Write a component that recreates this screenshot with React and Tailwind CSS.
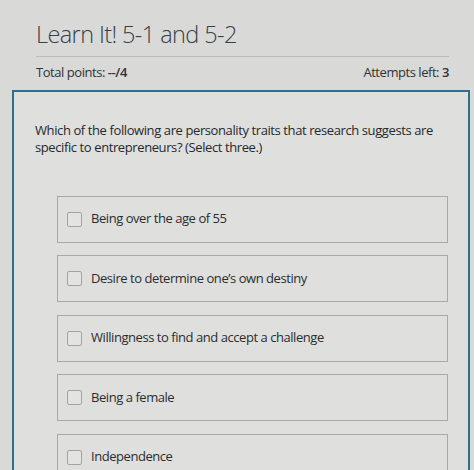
import React from 'react';

const options = [
  'Being over the age of 55',
  'Desire to determine one\u2019s own destiny',
  'Willingness to find and accept a challenge',
  'Being a female',
  'Independence',
];

function Option({ label }) {
  return (
    <div className="flex items-center h-[47px] border border-[#a9aaa8] bg-[#dfdfdd] pl-[9px] mb-[12.5px]">
      <span className="w-[15px] h-[15px] border border-[#a3a4a2] rounded-[2px] bg-[#e3e3e1] shrink-0" />
      <span className="ml-[9px] text-[13px] tracking-[-0.45px] text-[#2a2d30]">{label}</span>
    </div>
  );
}

export default function App() {
  return (
    <div
      className="w-[474px] h-[470px] overflow-hidden bg-[#d9d9d7] pl-[12px]"
      style={{ fontFamily: '"Open Sans", "Noto Sans", sans-serif' }}
    >
      <div className="pt-[18px] pl-[24px] pr-[25px]">
        <h1 className="text-[23.5px] font-light tracking-[-0.6px] text-[#35404a] leading-[32px]">Learn It! 5-1 and 5-2</h1>
        <div className="h-px bg-[#bcbcba] mt-[6px]" />
        <div className="flex justify-between text-[13px] tracking-[-0.45px] text-[#2f3236] mt-[6px]">
          <span>Total points: <b className="font-semibold">--/4</b></span>
          <span>Attempts left: <b className="font-semibold">3</b></span>
        </div>
      </div>
      <div className="mt-[7px] mr-[4px] border-2 border-[#2f6f8e] bg-[#dfdfdd] pt-[30px] pl-[21px] pr-[20px] h-[400px]">
        <p className="max-w-[404px] text-[13px] leading-[17px] tracking-[-0.4px] text-[#26292c]">
          Which of the following are personality traits that research suggests are specific to entrepreneurs? (Select three.)
        </p>
        <div className="mt-[40px] ml-[22px]">
          {options.map((o) => (
            <Option key={o} label={o} />
          ))}
        </div>
      </div>
    </div>
  );
}
